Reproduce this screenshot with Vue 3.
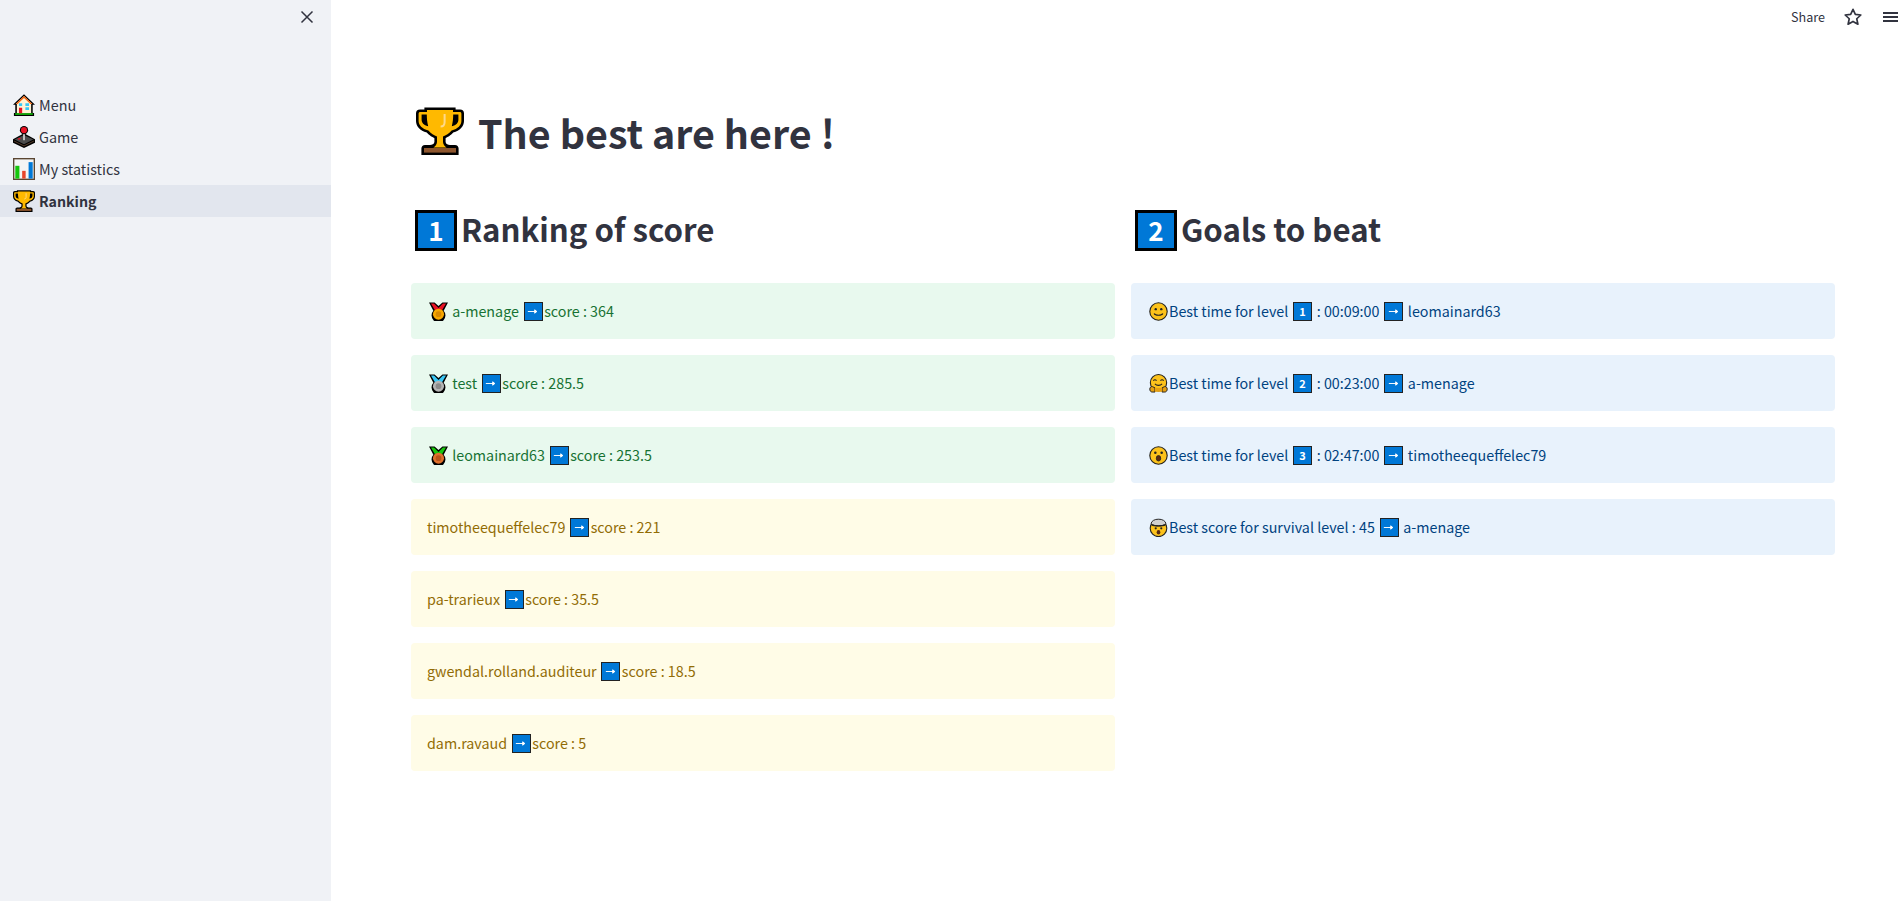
<script setup>
const navItems = [
  { icon: 'house', label: 'Menu' },
  { icon: 'joystick', label: 'Game' },
  { icon: 'chart', label: 'My statistics' },
  { icon: 'trophy', label: 'Ranking', active: true },
]

const arrow = { arrow: true }
const key = (digit) => ({ digit })
const emo = (name) => ({ emo: name })

const scores = [
  { kind: 'success', parts: [emo('medal1'), ' a-menage ', arrow, 'score : 364'] },
  { kind: 'success', parts: [emo('medal2'), ' test ', arrow, 'score : 285.5'] },
  { kind: 'success', parts: [emo('medal3'), ' leomainard63 ', arrow, 'score : 253.5'] },
  { kind: 'warning', parts: ['timotheequeffelec79 ', arrow, 'score : 221'] },
  { kind: 'warning', parts: ['pa-trarieux ', arrow, 'score : 35.5'] },
  { kind: 'warning', parts: ['gwendal.rolland.auditeur ', arrow, 'score : 18.5'] },
  { kind: 'warning', parts: ['dam.ravaud ', arrow, 'score : 5'] },
]

const goals = [
  { kind: 'info', parts: [emo('smile'), 'Best time for level ', key('1'), ' : 00:09:00 ', arrow, ' leomainard63'] },
  { kind: 'info', parts: [emo('hug'), 'Best time for level ', key('2'), ' : 00:23:00 ', arrow, ' a-menage'] },
  { kind: 'info', parts: [emo('hushed'), 'Best time for level ', key('3'), ' : 02:47:00 ', arrow, ' timotheequeffelec79'] },
  { kind: 'info', parts: [emo('explode'), 'Best score for survival level : 45 ', arrow, ' a-menage'] },
]

const columns = [
  { digit: '1', title: 'Ranking of score', rows: scores },
  { digit: '2', title: 'Goals to beat', rows: goals },
]
</script>

<template>
  <div class="page">
    <svg class="sprite" aria-hidden="true">
      <symbol id="trophy" viewBox="0 0 24 24">
        <path d="M4.200.3H19.800V1.200H22C23.300 1.200 24 2 24 3.200V7C24 9.500 22 12 18.600 12.800 17.500 14.200 15.500 15.300 14.800 15.600V17.500C15 18.600 16 19 17 19H19.500C20.600 19 21.300 19.800 21.300 20.800V24H2.700V20.800C2.700 19.800 3.400 19 4.500 19H7C8 19 9 18.600 9.200 17.500V15.600C8.500 15.300 6.500 14.200 5.400 12.800 2 12 0 9.500 0 7V3.200C0 2 .7 1.200 2 1.200H4.200Z" fill="#000"/>
        <path d="M5.500 1.500H18.500V2.500H21.800C22.400 2.500 22.700 2.800 22.700 3.400V7C22.700 9 21 11 17.800 11.700 16.700 13.200 14.800 14.200 13.500 14.700V17.500C13.600 18.800 14.300 19.700 15.300 20.300H8.700C9.700 19.700 10.400 18.800 10.500 17.500V14.700C9.200 14.200 7.300 13.200 6.200 11.700 3 11 1.300 9 1.300 7V3.400C1.300 2.800 1.600 2.500 2.200 2.500H5.500Z" fill="#ffb900"/>
        <path d="M2.800 3.800H5.400C5.400 5.800 5.600 7.800 6.100 9.600 3.800 9 2.800 7.800 2.800 6.200ZM21.200 3.800H18.600C18.600 5.800 18.400 7.800 17.900 9.600 20.200 9 21.200 7.800 21.200 6.200Z" fill="#000"/>
        <path d="M14.300 3.500V7.500C14.300 9 13.500 9.800 12.300 9.800" fill="none" stroke="#ffd98a" stroke-width="1"/>
        <rect x="4" y="20.500" width="16" height="2.300" fill="#8e562e"/>
      </symbol>
      <symbol id="house" viewBox="0 0 24 24">
        <path d="M12 .2 24 11.800H21.500V20.800H23V24H1V20.800H2.500V11.800H0Z" fill="#000"/>
        <path d="M12 2.200 21 11H19.800V21H4.200V11H3Z" fill="#fff3d6"/>
        <path d="M12 2.200 21 11H19L12 4.300 5 11H3Z" fill="#f7630c"/>
        <rect x="2.400" y="21" width="19.200" height="1.700" fill="#16c60c"/>
        <rect x="6.500" y="15" width="3.500" height="6" fill="#e81224"/>
        <path d="M6.500 10H10V13H6.500ZM13.500 10H17.500V13H13.500ZM13.500 14.500H17.500V17.500H13.500Z" fill="#3ac7f5"/>
      </symbol>
      <symbol id="joystick" viewBox="0 0 24 24">
        <path d="M12 8 24 14.500V18.200L12 24 0 18.200V14.500Z" fill="#000"/>
        <path d="M12 9.700 22.200 14.800 12 20 1.800 14.800Z" fill="#4a4a4a"/>
        <path d="M1.200 16.400 12 21.800 22.800 16.400" fill="none" stroke="#6b4a35" stroke-width=".9"/>
        <path d="M5 14c1-1 2.800-1.200 3.800-.6L6.500 15.200Z" fill="#e81224"/>
        <rect x="11" y="7" width="2" height="8.500" fill="#c8c8c8"/>
        <circle cx="12" cy="4.500" r="4.500" fill="#000"/>
        <circle cx="12" cy="4.500" r="3.300" fill="#e81224"/>
      </symbol>
      <symbol id="chart" viewBox="0 0 24 24">
        <rect width="24" height="24" fill="#5a4632"/>
        <rect x="1.500" y="1.500" width="21" height="21" fill="#f4f4f4"/>
        <rect x="2.500" y="8.500" width="4.500" height="14" fill="#16c60c"/>
        <rect x="10" y="14" width="3.800" height="8.500" fill="#e8452c"/>
        <rect x="17" y="4.500" width="4.500" height="18" fill="#0078d7"/>
      </symbol>
      <symbol id="medal1" viewBox="0 0 24 24">
        <path d="M0 .5H7L12 5 17 .5H24L18.500 11A8.800 8.800 0 1 1 5.500 11Z" fill="#000"/>
        <path d="M2.500 2H6.400L12 7.500 17.600 2H21.500L16.500 10.500H7.500Z" fill="#e81224"/>
        <circle cx="12" cy="15.400" r="7" fill="#f7a800"/>
        <circle cx="12" cy="15.400" r="3.600" fill="#d98a00"/>
      </symbol>
      <symbol id="medal2" viewBox="0 0 24 24">
        <path d="M0 .5H7L12 5 17 .5H24L18.500 11A8.800 8.800 0 1 1 5.500 11Z" fill="#000"/>
        <path d="M2.500 2H6.400L12 7.500 17.600 2H21.500L16.500 10.500H7.500Z" fill="#3ac7f5"/>
        <circle cx="12" cy="15.400" r="7" fill="#b4b4b4"/>
        <circle cx="12" cy="15.400" r="3.600" fill="#8a8a8a"/>
      </symbol>
      <symbol id="medal3" viewBox="0 0 24 24">
        <path d="M0 .5H7L12 5 17 .5H24L18.500 11A8.800 8.800 0 1 1 5.500 11Z" fill="#000"/>
        <path d="M2.500 2H6.400L12 7.500 17.600 2H21.500L16.500 10.500H7.500Z" fill="#16c60c"/>
        <circle cx="12" cy="15.400" r="7" fill="#e0702c"/>
        <circle cx="12" cy="15.400" r="3.600" fill="#b9541a"/>
      </symbol>
      <symbol id="smile" viewBox="0 0 24 24">
        <circle cx="12" cy="12" r="11" fill="#fcc21b" stroke="#222" stroke-width="1.400"/>
        <circle cx="8.500" cy="9" r="1.500" fill="#222"/>
        <circle cx="15.500" cy="9" r="1.500" fill="#222"/>
        <path d="M6.500 14.500c1.500 3 9.500 3 11 0" fill="none" stroke="#222" stroke-width="1.500"/>
      </symbol>
      <symbol id="hug" viewBox="0 0 24 24">
        <circle cx="12" cy="11" r="10.300" fill="#fcc21b" stroke="#222" stroke-width="1.400"/>
        <path d="M5.500 8.500c1-1.500 3-1.500 4 0m5 0c1-1.500 3-1.500 4 0M7.500 12.500c2 2.500 7 2.500 9 0" fill="none" stroke="#222" stroke-width="1.300"/>
        <path d="M1 19c0-2 1.500-3.500 3.500-3l3 1.500v5.300H4C2 22.800 1 21 1 19ZM23 19c0-2-1.500-3.500-3.500-3l-3 1.500v5.300H20c2 0 3-1.800 3-3.800Z" fill="#e6a010" stroke="#222" stroke-width="1.200"/>
        <path d="M7.500 17.500H16.500V22.500H7.500Z" fill="#e6a010"/>
      </symbol>
      <symbol id="hushed" viewBox="0 0 24 24">
        <circle cx="12" cy="12" r="11" fill="#fcc21b" stroke="#222" stroke-width="1.400"/>
        <circle cx="8" cy="8.500" r="1.600" fill="#222"/>
        <circle cx="16" cy="8.500" r="1.600" fill="#222"/>
        <ellipse cx="12" cy="15.500" rx="2.800" ry="3.500" fill="#5a2a10" stroke="#222"/>
      </symbol>
      <symbol id="explode" viewBox="0 0 24 24">
        <circle cx="12" cy="13" r="10.500" fill="#fcc21b" stroke="#222" stroke-width="1.400"/>
        <path d="M2.500 7C3.500 3.500 7 1.500 12 1.500S20.500 3.500 21.500 7C19.500 9 15.500 10 12 10S4.500 9 2.500 7Z" fill="#d0d0d0" stroke="#222" stroke-width="1.200"/>
        <path d="M3 7.500c3 2 15 2 18 0v1.500c-3 2.500-15 2.500-18 0z" fill="#222"/>
        <circle cx="8.500" cy="13" r="1.400" fill="#222"/>
        <circle cx="15.500" cy="13" r="1.400" fill="#222"/>
        <ellipse cx="12" cy="18" rx="2.300" ry="2.800" fill="#5a2a10"/>
      </symbol>
    </svg>

    <aside class="sidebar">
      <button class="close" aria-label="Close sidebar">
        <svg viewBox="0 0 16 16" width="16" height="16"><path d="M2.500 2.500l11 11m0-11l-11 11" stroke="#31333f" stroke-width="1.500" fill="none"/></svg>
      </button>
      <nav class="nav">
        <a v-for="item in navItems" :key="item.label" :class="['nav-row', { 'nav-row--active': item.active }]">
          <svg class="nav-icon"><use :href="'#' + item.icon" /></svg>
          <span>{{ item.label }}</span>
        </a>
      </nav>
    </aside>

    <main class="main">
      <header class="toolbar">
        <span class="share">Share</span>
        <svg class="star" viewBox="0 0 24 24" width="20" height="20"><path d="M12 2.800l2.800 6.100 6.600.7-4.900 4.500 1.400 6.600-5.900-3.400-5.900 3.400 1.400-6.600-4.900-4.500 6.600-.7z" fill="none" stroke="#31333f" stroke-width="2" stroke-linejoin="round"/></svg>
        <span class="burger"></span>
      </header>

      <h1 class="title">
        <svg class="title-emo"><use href="#trophy" /></svg>
        <span>The best are here !</span>
      </h1>

      <div class="columns">
        <section v-for="col in columns" :key="col.digit" class="column">
          <h2 class="heading">
            <span class="heading-key"><b>{{ col.digit }}</b></span>
            <span class="heading-text">{{ col.title }}</span>
          </h2>
          <div class="alerts">
            <div v-for="(row, i) in col.rows" :key="i" :class="['alert', 'alert--' + row.kind]">
              <template v-for="(part, j) in row.parts" :key="j">
                <span v-if="typeof part === 'string'" class="alert-text">{{ part }}</span>
                <span v-else-if="part.emo" class="glyph"><svg class="glyph-emo"><use :href="'#' + part.emo" /></svg></span>
                <span v-else-if="part.digit" class="glyph"><b class="key">{{ part.digit }}</b></span>
                <span v-else class="glyph">
                  <b class="key">
                    <svg viewBox="0 0 14 10" width="12" height="9"><path d="M1 5h10M9 3 11.500 5 9 7z" stroke="#fff" stroke-width="1.100" fill="#fff"/></svg>
                  </b>
                </span>
              </template>
            </div>
          </div>
        </section>
      </div>
    </main>
  </div>
</template>

<style>
html,
body {
  margin: 0;
  background: #fff;
  overflow: hidden;
}
</style>

<style scoped>
.page {
  display: flex;
  height: 901px;
  font-family: "Noto Sans CJK JP", "Source Sans Pro", "Noto Sans", sans-serif;
  font-size: 14.3px;
  color: #31333f;
}

.sprite {
  position: absolute;
  width: 0;
  height: 0;
}

.sidebar {
  width: 331px;
  flex-shrink: 0;
  background: #f0f2f6;
  box-sizing: border-box;
  padding-top: 9px;
}

.close {
  display: block;
  margin-left: 299px;
  padding: 0;
  width: 16px;
  height: 16px;
  border: none;
  background: none;
}

.nav {
  margin-top: 64px;
}

.nav-row {
  display: flex;
  align-items: center;
  height: 32px;
  padding-left: 13px;
  font-size: 14.4px;
  line-height: 32px;
}

.nav-row--active {
  background: #e2e6ee;
  font-weight: 600;
  font-size: 14.2px;
}

.nav-icon {
  width: 22px;
  height: 22px;
  margin-right: 4px;
  flex-shrink: 0;
}

.main {
  position: relative;
  flex: 1;
  padding: 0 63px 0 80px;
  min-width: 0;
}

.toolbar {
  position: absolute;
  top: 0;
  right: 0;
  display: flex;
  align-items: center;
  height: 33px;
}

.share {
  margin-right: 18px;
  font-size: 12.6px;
}

.star {
  margin-right: 20px;
}

.burger {
  width: 15px;
  height: 10px;
  border-top: 2px solid #31333f;
  border-bottom: 2px solid #31333f;
  box-sizing: border-box;
  position: relative;
}

.burger::after {
  content: "";
  position: absolute;
  left: 0;
  right: 0;
  top: 2px;
  height: 2px;
  background: #31333f;
}

.title {
  display: flex;
  align-items: center;
  margin: 0;
  padding-top: 97px;
  font-size: 39.4px;
  font-weight: 700;
  line-height: 70px;
}

.title-emo {
  width: 48px;
  height: 50px;
  margin: 0 14px 2px 5px;
}

.columns {
  display: grid;
  grid-template-columns: 1fr 1fr;
  gap: 16px;
  margin-top: 37px;
}

.heading {
  display: flex;
  align-items: center;
  margin: 0 0 27px;
  font-size: 31.2px;
  font-weight: 600;
  line-height: 50px;
}

.heading-key {
  width: 50px;
  flex-shrink: 0;
}

.heading-text {
  padding-bottom: 2px;
}

.heading-key b {
  display: flex;
  align-items: center;
  justify-content: center;
  width: 42px;
  height: 41px;
  margin-left: 4px;
  box-sizing: border-box;
  border: 3px solid #000;
  background: #0078d7;
  color: #fff;
  font-size: 26px;
  font-weight: 700;
  line-height: 1;
}

.alerts {
  display: flex;
  flex-direction: column;
  gap: 16px;
}

.alert {
  display: flex;
  align-items: center;
  height: 56px;
  box-sizing: border-box;
  padding: 0 16px;
  border-radius: 4px;
  white-space: pre;
}

.alert-text {
  padding-bottom: 2px;
}

.alert--success {
  background: #e8f9ee;
  color: #177233;
}

.alert--warning {
  background: #fffce7;
  color: #926c05;
}

.alert--info {
  background: #e8f2fc;
  color: #004280;
}

.glyph {
  display: flex;
  justify-content: center;
  align-items: center;
  width: 22px;
  height: 19px;
}

.glyph-emo {
  width: 19px;
  height: 19px;
}

.key {
  display: flex;
  align-items: center;
  justify-content: center;
  width: 19px;
  height: 19px;
  box-sizing: border-box;
  border: 1.500px solid #222;
  background: #0078d7;
  color: #fff;
  font-size: 11px;
  font-weight: 700;
  line-height: 1;
}
</style>
